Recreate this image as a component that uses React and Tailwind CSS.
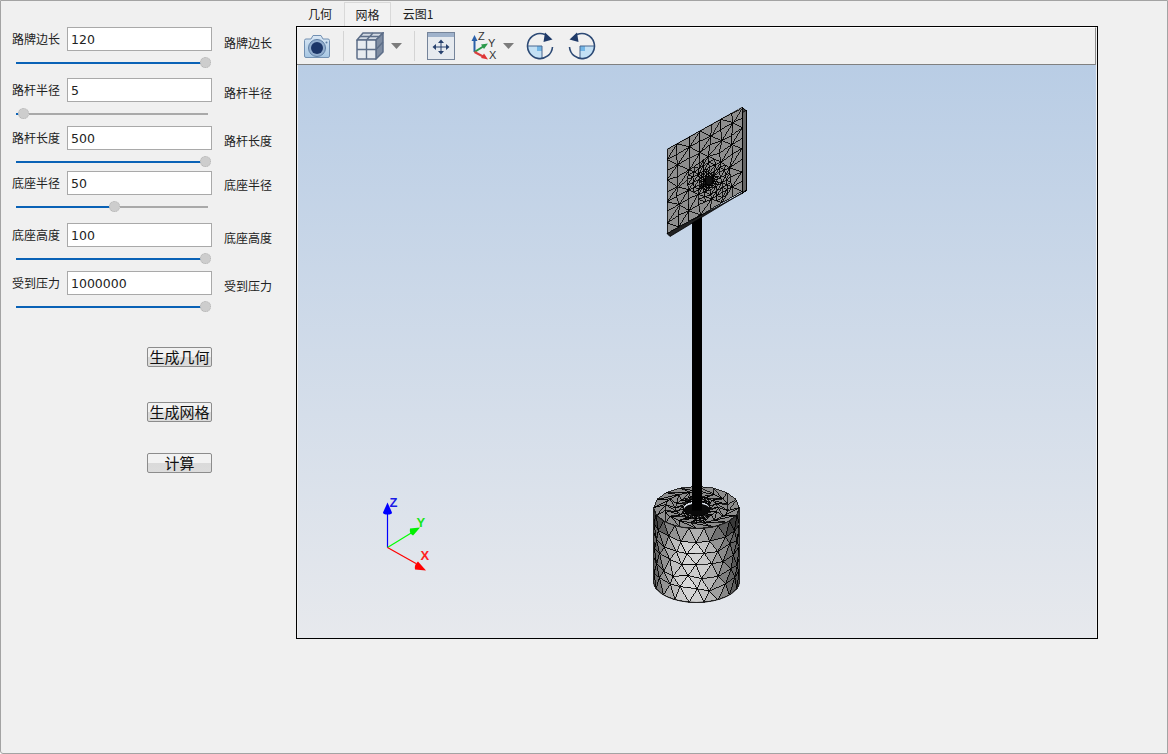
import React from "react";

const CJK = "font-['Noto_Sans_CJK_SC','Liberation_Sans',sans-serif]";

const rows = [
  { label: "路牌边长", value: "120", top: "mt-0", right: "mt-[8px]", fill: "w-[185px]" },
  { label: "路杆半径", value: "5", top: "mt-[10px]", right: "mt-[7px]", fill: "w-[3px]" },
  { label: "路杆长度", value: "500", top: "mt-[7px]", right: "mt-[7px]", fill: "w-[185px]" },
  { label: "底座半径", value: "50", top: "mt-[4px]", right: "mt-[6px]", fill: "w-[94px]" },
  { label: "底座高度", value: "100", top: "mt-[11px]", right: "mt-[7px]", fill: "w-[185px]" },
  { label: "受到压力", value: "1000000", top: "mt-[7px]", right: "mt-[7px]", fill: "w-[185px]" },
];

function Row({ r }) {
  return (
    <div className={`flex ${r.top}`}>
      <div className="w-[201px]">
        <div className="flex items-center h-[24px]">
          <span className="w-[55px] text-[12px] leading-none text-[#222] whitespace-nowrap">{r.label}</span>
          <input
            readOnly
            value={r.value}
            className="w-[145px] h-[24px] border border-[#a9a9a9] bg-white pl-[3px] text-[12.5px] text-[#222] font-['DejaVu_Sans',sans-serif] outline-none"
          />
        </div>
        <div className="flex items-center h-[11px] mt-[6px] ml-[4px] w-[192px]">
          <div className={`h-[2px] bg-[#0a62b6] shrink-0 ${r.fill}`} />
          <div className="w-[11px] h-[11px] rounded-full bg-[#cdcdcd] border border-dotted border-[#b4b4b4] shrink-0 -ml-[1px]" />
          <div className="h-[2px] bg-[#a9a9a9] flex-1 min-w-0" />
        </div>
      </div>
      <span className={`ml-[11px] text-[12px] leading-none text-[#222] whitespace-nowrap ${r.right} pt-[2px]`}>{r.label}</span>
    </div>
  );
}

function Btn({ children, className }) {
  return (
    <button className={`block w-[65px] h-[20px] ml-[135px] pb-[2px] rounded-[2px] border border-[#8c8c8c] bg-[linear-gradient(#f2f2f2_0%,#f2f2f2_50%,#dadada_50%,#dcdcdc_100%)] text-[15px] leading-none text-[#111] whitespace-nowrap ${className}`}>
      {children}
    </button>
  );
}

function Camera() {
  return (
    <svg width="28" height="25" viewBox="0 0 28 25" className="shrink-0">
      <defs>
        <linearGradient id="cam" x1="0" y1="0" x2="0" y2="1">
          <stop offset="0" stopColor="#dbe8f5" />
          <stop offset="1" stopColor="#a6c6e2" />
        </linearGradient>
      </defs>
      <path d="M1.5 6.5 Q1.5 5 3 5 H8 L10 1.5 H18 L20 5 H25 Q26.5 5 26.5 6.5 V22 Q26.5 23.5 25 23.5 H3 Q1.5 23.5 1.5 22 Z" fill="url(#cam)" stroke="#7290b2" strokeWidth="1" />
      <circle cx="14" cy="14" r="8.5" fill="#93aece" stroke="#5f7fa5" />
      <circle cx="14" cy="14" r="6" fill="#1c3668" />
      <circle cx="23.5" cy="8.5" r="1" fill="#5f7fa5" />
    </svg>
  );
}

function Cube() {
  const s = "#5d6e88";
  return (
    <svg width="28" height="28" viewBox="0 0 28 28" className="shrink-0">
      <path d="M1 8 L7 1 H27 L20 8 Z" fill="#d3dae3" stroke={s} strokeWidth="1.5" />
      <path d="M20 8 L27 1 V20 L20 27 Z" fill="#7e8ca2" stroke={s} strokeWidth="1.5" />
      <rect x="1" y="8" width="19" height="19" rx="1" fill="#e7ebf0" stroke={s} strokeWidth="1.5" />
      <path d="M10.5 8 V27 M1 17.5 H20 M10.5 8 L17 1 M4 4.5 H23.5 M20 17.5 L27 10" fill="none" stroke={s} strokeWidth="1.4" />
    </svg>
  );
}

function Caret() {
  return (
    <svg width="11" height="6" viewBox="0 0 11 6" className="shrink-0">
      <path d="M0 0 H11 L5.5 6 Z" fill="#7c7c7c" />
    </svg>
  );
}

function Fit() {
  const c = "#27416e";
  return (
    <svg width="28" height="28" viewBox="0 0 28 28" className="shrink-0">
      <rect x="0.5" y="0.5" width="27" height="27" fill="#e6eaef" stroke="#75849a" />
      <rect x="1" y="1" width="26" height="4" fill="#9fb2cb" />
      <path d="M7 15 H21 M14 9 V21" stroke={c} strokeWidth="1" />
      <path d="M14 7.5 L11 11 H17 Z M14 22.5 L11 19 H17 Z M5.5 15 L9 12 V18 Z M22.5 15 L19 12 V18 Z" fill={c} />
    </svg>
  );
}

function Axes() {
  return (
    <svg width="28" height="30" viewBox="0 0 28 30" className="shrink-0 font-['Liberation_Sans',sans-serif]">
      <path d="M3.5 21 V8" stroke="#2a5fa8" strokeWidth="2" />
      <path d="M3.5 4 L0.5 10 H6.5 Z" fill="#2a5fa8" />
      <path d="M3.5 21 L13 15" stroke="#2b9a4a" strokeWidth="2" />
      <path d="M17 12.5 L10 13.5 L13 18 Z" fill="#2b9a4a" />
      <path d="M3.5 21 L13 26" stroke="#d94040" strokeWidth="2" />
      <path d="M17 28.5 L10 27 L13 22.5 Z" fill="#e03535" />
      <text x="7" y="9" fontSize="11" fill="#333">Z</text>
      <text x="17" y="16" fontSize="11" fill="#333">Y</text>
      <text x="18" y="28" fontSize="11" fill="#333">X</text>
    </svg>
  );
}

function Rot({ flip }) {
  return (
    <svg width="28" height="28" viewBox="0 0 28 28" className={`shrink-0 ${flip ? "-scale-x-100" : ""}`}>
      <path d="M1.5 14 H16 V26.5 H14 A12.5 12.5 0 0 1 1.5 14 Z" fill="#c3e0f4" />
      <path d="M11 14 H16 V19 H11 Z" fill="#72b6e6" />
      <path d="M1.5 14 H16 V26.5" stroke="#48678f" strokeWidth="1" fill="none" />
      <path d="M19 2.6 A12.5 12.5 0 1 0 26.5 15" fill="none" stroke="#2d4a75" strokeWidth="1.6" />
      <path d="M19 0.5 L26.5 7.5 L17.5 10 Z" fill="#1f3a68" />
    </svg>
  );
}

function Sep({ className }) {
  return <div className={`w-[1px] h-[30px] bg-[#d4d4d4] shrink-0 ${className}`} />;
}

const rnd = (a, b) => {
  const x = Math.sin(a * 127.1 + b * 311.7) * 43758.5453;
  return x - Math.floor(x);
};
const pts = (arr) => arr.map((q) => q[0].toFixed(1) + "," + q[1].toFixed(1)).join(" ");
const mid = (a, b) => [(a[0] + b[0]) / 2, (a[1] + b[1]) / 2];

function refine(tri, c, radii, depth, out) {
  const gx = (tri[0][0] + tri[1][0] + tri[2][0]) / 3;
  const gy = (tri[0][1] + tri[1][1] + tri[2][1]) / 3;
  const d = Math.hypot(gx - c[0], gy - c[1]);
  if (depth < radii.length && d < radii[depth]) {
    const [a, b, e] = tri;
    const ab = mid(a, b), be = mid(b, e), ea = mid(e, a);
    [[a, ab, ea], [ab, b, be], [ea, be, e], [ab, be, ea]].forEach((t) => refine(t, c, radii, depth + 1, out));
  } else out.push(tri);
}

function signTris() {
  const A = [667, 149], B = [742, 107], D = [667, 233];
  const n = 7, m = 8;
  const P = (i, j) => {
    const ex = i === 0 || i === n, ey = j === 0 || j === m;
    const u = i / n + (ex ? 0 : (rnd(i, j) - 0.5) * 0.05);
    const v = j / m + (ey ? 0 : (rnd(j, i + 9) - 0.5) * 0.04);
    return [A[0] + u * (B[0] - A[0]) + v * (D[0] - A[0]), A[1] + u * (B[1] - A[1]) + v * (D[1] - A[1])];
  };
  const out = [];
  const c = [709, 180];
  for (let i = 0; i < n; i++)
    for (let j = 0; j < m; j++) {
      const a = P(i, j), b = P(i + 1, j), e = P(i + 1, j + 1), d = P(i, j + 1);
      const pair = (i + j) % 2 ? [[a, b, e], [a, e, d]] : [[a, b, d], [b, e, d]];
      pair.forEach((t) => refine(t, c, [22, 10, 5], 0, out));
    }
  return out;
}

function topTris() {
  const cx = 696.5, cy = 507, rx = 43, ry = 21;
  const rs = [1, 0.74, 0.5, 0.3];
  const N = 16;
  const P = (k, i) => {
    const a = ((i + (k % 2) * 0.5) / N) * Math.PI * 2;
    return [cx + rs[k] * rx * Math.cos(a), cy + rs[k] * ry * Math.sin(a)];
  };
  const out = [];
  const c = [697, 508];
  for (let k = 0; k < rs.length - 1; k++)
    for (let i = 0; i < N; i++) {
      const d = k % 2 ? 1 : 0;
      refine([P(k, i), P(k, i + 1), P(k + 1, i + 1 - d)], c, [14], 0, out);
      refine([P(k, i + 1), P(k + 1, i + 1 - d), P(k + 1, i + 2 - d)], c, [14], 0, out);
    }
  return out;
}

function sideTris() {
  const cx = 696.5, cy = 507, rx = 43, ry = 21, h = 74;
  const R = 6, C = 9;
  const P = (r, c) => {
    const cc = c + (r % 2 ? 0.5 : 0);
    const inner = cc > 0 && cc < C && r > 0 && r < R;
    const cj = Math.min(C, Math.max(0, cc + (inner ? (rnd(r, c) - 0.5) * 0.35 : 0)));
    const a = (-90 + (180 * cj) / C) * (Math.PI / 180);
    const rj = r + (inner ? (rnd(c + 3, r) - 0.5) * 0.35 : 0);
    return [cx + rx * Math.sin(a), cy + ry * Math.cos(a) + (h * rj) / R, a];
  };
  const out = [];
  const shade = (tri, r) => {
    const a = (tri[0][2] + tri[1][2] + tri[2][2]) / 3;
    let g = 88 + 125 * Math.pow(Math.max(0, Math.cos(a + 0.12)), 2.8);
    if (r === 0) g -= 40;
    g += (rnd(r, a * 10) - 0.5) * 14;
    g = Math.round(Math.min(218, g));
    return `rgb(${g},${g},${g})`;
  };
  for (let r = 0; r < R; r++)
    for (let c = -1; c < C; c++) {
      const d = r % 2;
      const t1 = [P(r, c), P(r, c + 1), P(r + 1, c + (d ? 1 : 0))];
      const t2 = [P(r, c + 1), P(r + 1, c + (d ? 1 : 0)), P(r + 1, c + (d ? 2 : 1))];
      out.push({ t: t1, f: shade(t1, r) }, { t: t2, f: shade(t2, r) });
    }
  return out;
}

function Scene() {
  const font = "'Liberation Sans',sans-serif";
  return (
    <svg viewBox="298 65 798 572" className="block w-full h-full">
      <g>
        <path d="M387.5 547 V510" stroke="#0000ff" strokeWidth="1.2" />
        <path d="M387.5 502 L383 512 Q383 514 387.5 514 Q392 514 392 512 Z" fill="#0000ff" />
        <path d="M387.5 547 L412 532" stroke="#00ff00" strokeWidth="1.2" />
        <path d="M420 527 L410 528 Q409 533 413 535 Q415 533 420 527 Z" fill="#00f000" />
        <path d="M387.5 547 L416 563" stroke="#ff0000" strokeWidth="1.2" />
        <path d="M426 570 L418 561 Q414 564 415 569 Z" fill="#ff0000" />
        <text x="389.5" y="506" fontSize="13" fontWeight="700" fill="#1a1ae6" fontFamily={font}>Z</text>
        <text x="416.5" y="526" fontSize="13" fontWeight="700" fill="#19e619" fontFamily={font}>Y</text>
        <text x="420.5" y="559" fontSize="13" fontWeight="700" fill="#ff2020" fontFamily={font}>X</text>
      </g>

      <rect x="692" y="205" width="10" height="40" fill="#000" />
      <path d="M742 107 L746 110 V190 L742 193 Z" fill="#666" stroke="#000" strokeWidth="1" shapeRendering="crispEdges" />
      <path d="M667 233 L670 236 L746 190 L742 193 Z" fill="#222" stroke="#000" strokeWidth="0.8" />
      <path d="M667 149 L742 107 L746 110 L671 152 Z" fill="#444" stroke="#000" strokeWidth="0.8" />
      <g fill="#8e8e8e" stroke="#000" strokeWidth="0.8" shapeRendering="crispEdges">
        {signTris().map((t, i) => (
          <polygon key={i} points={pts(t)} />
        ))}
      </g>
      <ellipse cx="709" cy="180" rx="3" ry="4" fill="#111" />

      <g stroke="#000" strokeWidth="0.8" shapeRendering="crispEdges">
        {sideTris().map((o, i) => (
          <polygon key={i} points={pts(o.t)} fill={o.f} />
        ))}
        <g fill="#8e8e8e">
          {topTris().map((t, i) => (
            <polygon key={i} points={pts(t)} />
          ))}
        </g>
      </g>
      <path d="M653.5 507 A43 21 0 0 0 739.5 507 M653.5 507 V581 A43 21 0 0 0 739.5 581 V507" fill="none" stroke="#222" strokeWidth="1" />
      <ellipse cx="697" cy="509" rx="13" ry="6" fill="#0a0a0a" />
      <rect x="692" y="228" width="10" height="282" fill="#000" />
    </svg>
  );
}

export default function App() {
  return (
    <div className={`w-[1168px] h-[754px] border border-[#a3a3a3] rounded-bl-[3px] bg-[#f0f0f0] flex overflow-hidden ${CJK}`}>
      <aside className="w-[295px] shrink-0 pt-[26px] pl-[11px]">
        {rows.map((r) => (
          <Row key={r.label} r={r} />
        ))}
        <Btn className="mt-[35px]">生成几何</Btn>
        <Btn className="mt-[35px]">生成网格</Btn>
        <Btn className="mt-[31px]">计算</Btn>
      </aside>
      <section className="flex flex-col pt-[1px]">
        <div className="flex h-[24px] text-[12px] text-[#222]">
          <div className="w-[48px] flex items-center justify-center">几何</div>
          <div className="w-[47px] flex items-center justify-center border border-b-0 border-[#d9d9d9] bg-[#f2f2f2]">网格</div>
          <div className="w-[54px] flex items-center justify-center">云图1</div>
        </div>
        <div className="w-[802px] h-[613px] border border-black flex flex-col pr-[1px]">
          <div className="h-[38px] shrink-0 flex items-center border-t border-t-white border-b border-b-[#808080] border-r border-r-[#8a8a8a] bg-[#f0f0f0]">
            <div className="ml-[6px]"><Camera /></div>
            <Sep className="ml-[12px]" />
            <div className="ml-[12px]"><Cube /></div>
            <div className="ml-[7px]"><Caret /></div>
            <Sep className="ml-[12px]" />
            <div className="ml-[12px]"><Fit /></div>
            <div className="ml-[16px]"><Axes /></div>
            <div className="ml-[4px]"><Caret /></div>
            <div className="ml-[12px]"><Rot /></div>
            <div className="ml-[14px]"><Rot flip /></div>
          </div>
          <div className="flex-1 min-h-0 ml-[1px] bg-gradient-to-b from-[#b9cde5] to-[#e7e9ed]">
            <Scene />
          </div>
        </div>
      </section>
    </div>
  );
}
